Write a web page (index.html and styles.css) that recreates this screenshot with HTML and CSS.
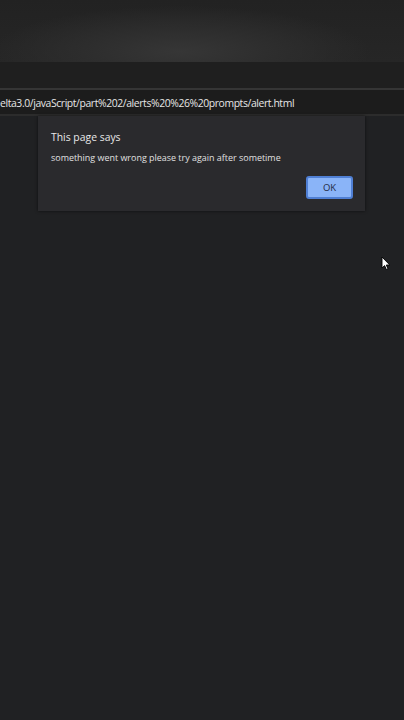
FILE: index.html
```html
<!DOCTYPE html>
<html lang="en">
<head>
<meta charset="utf-8">
<title>alert</title>
<link rel="stylesheet" href="styles.css">
</head>
<body>
<div class="chrome-top"></div>
<div class="tab-band"></div>
<div class="url-bar"><span class="url-text">elta3.0/javaScript/part%202/alerts%20%26%20prompts/alert.html</span></div>
<main class="page">
  <div class="dialog">
    <div class="dialog-title">This page says</div>
    <div class="dialog-msg">something went wrong please try again after sometime</div>
    <div class="dialog-actions"><button class="ok-btn">OK</button></div>
  </div>
  <svg class="cursor" width="10" height="15" viewBox="0 0 10 15"><path d="M1 1 L1 12 L3.6 9.6 L5.4 13.6 L7 12.9 L5.3 9 L8.8 9 Z" fill="#fff" stroke="#000" stroke-width="0.9"/></svg>
</main>
</body>
</html>
```
FILE: styles.css
```css
html, body {
  margin: 0;
  padding: 0;
  height: 100%;
  background: #202123;
  font-family: "Open Sans", "Noto Sans", sans-serif;
  overflow: hidden;
}
.chrome-top {
  height: 62px;
  background:
    radial-gradient(ellipse 190px 46px at 180px 52px, #363636 0%, #2e2e2e 45%, rgba(38,38,38,0) 100%),
    linear-gradient(#222222, #262626);
}
.tab-band {
  height: 26px;
  background: #1f1f1f;
  border-bottom: 2px solid #353535;
}
.url-bar {
  height: 24px;
  background: #1c1c1c;
  border-bottom: 2px solid #2c2c2c;
  display: flex;
  align-items: center;
  white-space: nowrap;
  overflow: hidden;
}
.url-text {
  color: #e6e6e6;
  font-size: 10.4px;
  letter-spacing: -0.4px;
  margin-top: 1px;
}
.page {
  position: relative;
  height: 604px;
  background: #202123;
}
.dialog {
  margin-left: 38px;
  width: 327px;
  height: 95px;
  box-sizing: border-box;
  background: #2a2a2d;
  box-shadow: 0 0 3px rgba(0,0,0,0.6);
  padding: 13px 12px 0 13px;
  display: flex;
  flex-direction: column;
}
.dialog-title {
  color: #e8e8e8;
  font-size: 10.4px;
  line-height: 16px;
}
.dialog-msg {
  color: #e0e0e0;
  font-size: 8.95px;
  line-height: 12px;
  margin-top: 7px;
}
.dialog-actions {
  display: flex;
  justify-content: flex-end;
  margin-top: 12px;
}
.ok-btn {
  width: 47px;
  height: 23px;
  background: #8ab4f8;
  border: 2px solid #4f7fd4;
  border-radius: 3px;
  color: #1f2a44;
  font-family: "Open Sans", "Noto Sans", sans-serif;
  font-size: 9.5px;
  padding: 0;
}
.cursor {
  position: absolute;
  left: 381px;
  top: 140px;
}
```
